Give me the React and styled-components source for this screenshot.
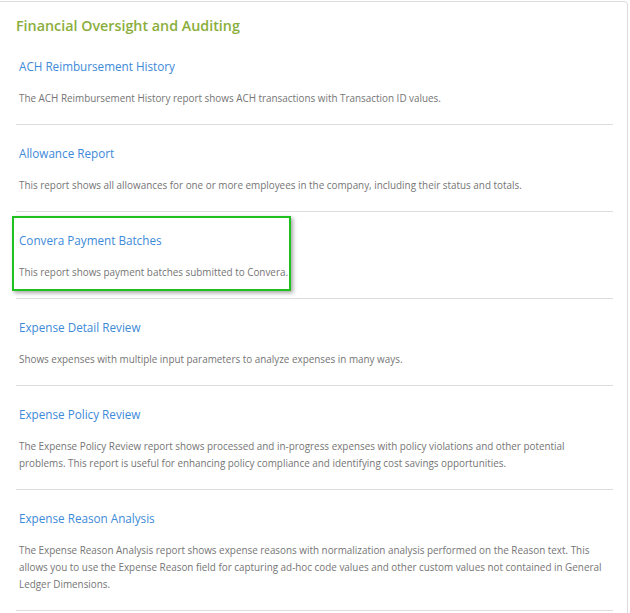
import React from 'react';
import styled, { createGlobalStyle } from 'styled-components';

const GlobalStyle = createGlobalStyle`
    html, body {
        margin: 0;
        padding: 0;
        overflow: hidden;
        background: #ffffff;
        font-family: "Open Sans", "Liberation Sans", sans-serif;
    }
`

const reports = [
    {
        title: 'ACH Reimbursement History',
        text: 'The ACH Reimbursement History report shows ACH transactions with Transaction ID values.'
    },
    {
        title: 'Allowance Report',
        text: 'This report shows all allowances for one or more employees in the company, including their status and totals.'
    },
    {
        title: 'Convera Payment Batches',
        text: 'This report shows payment batches submitted to Convera.',
        highlighted: true
    },
    {
        title: 'Expense Detail Review',
        text: 'Shows expenses with multiple input parameters to analyze expenses in many ways.'
    },
    {
        title: 'Expense Policy Review',
        text: 'The Expense Policy Review report shows processed and in-progress expenses with policy violations and other potential problems. This report is useful for enhancing policy compliance and identifying cost savings opportunities.'
    },
    {
        title: 'Expense Reason Analysis',
        text: 'The Expense Reason Analysis report shows expense reasons with normalization analysis performed on the Reason text. This allows you to use the Expense Reason field for capturing ad-hoc code values and other custom values not contained in General Ledger Dimensions.'
    }
]

export default function App() {
    return (
        <>
            <GlobalStyle />
            <Card>
                <Heading>Financial Oversight and Auditing</Heading>
                <List>
                    {reports.map((r) => (
                        <Item key={r.title} $highlighted={r.highlighted}>
                            <Title href="#">{r.title}</Title>
                            <Description>{r.text}</Description>
                        </Item>
                    ))}
                </List>
            </Card>
        </>
    )
}

const Card = styled.div`
    box-sizing: border-box;
    width: 632px;
    margin: 1px 0 0 -4px;
    padding: 14px 14px 20px 19px;
    border: 1px solid #dcdcdc;
    border-radius: 4px;
    background: #fff;
`

const Heading = styled.h2`
    margin: 0 0 2px 0;
    font-size: 14.3px;
    line-height: 20px;
    font-weight: 600;
    color: #8aae3c;
`

const List = styled.div`
    display: flex;
    flex-direction: column;
`

const Item = styled.div`
    position: relative;
    padding: 18px 0 17px 3px;
    border-bottom: 1px solid #dddddd;
    ${(p) => p.$highlighted && `
        &::after {
            content: '';
            position: absolute;
            left: -4px;
            top: 4px;
            width: 279px;
            height: 75px;
            box-sizing: border-box;
            border: 2px solid #1fc11f;
            box-shadow: 2px 2px 4px rgba(0, 0, 0, 0.35);
            pointer-events: none;
        }
    `}
`

const Title = styled.a`
    display: block;
    font-size: 11.7px;
    line-height: 20px;
    color: #3d8ad8;
    text-decoration: none;
`

const Description = styled.p`
    margin: 14px 0 0 0;
    font-size: 9.9px;
    line-height: 17px;
    color: #757575;
`
